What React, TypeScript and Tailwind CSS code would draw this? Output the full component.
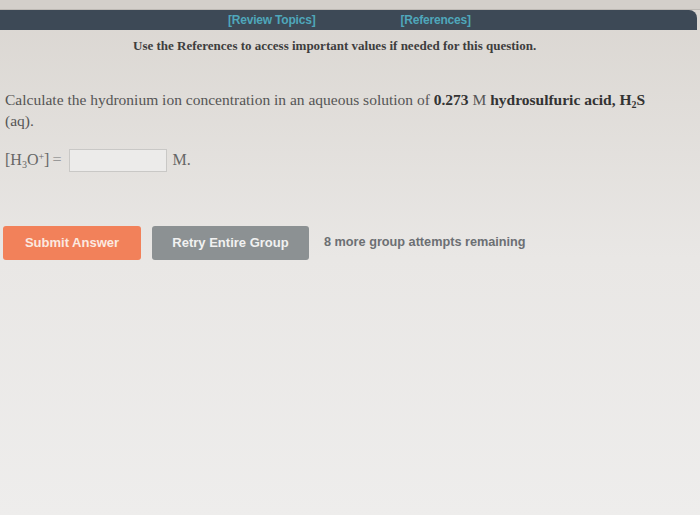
export default function App() {
  return (
    <div className="w-[700px] h-[515px] overflow-hidden flex flex-col bg-linear-to-b from-[#dad6d1] via-[#e9e7e5] to-[#eeedec] font-['Liberation_Serif',serif]">
      {/* top strip */}
      <div className="h-[10px] bg-[#d3cfca] border-b border-[#bdb9b4]" />

      {/* header bar */}
      <div className="h-[20px] mr-[3px] bg-[#3d4956] rounded-tr-[8px] flex items-center pl-[228px] font-['Liberation_Sans',sans-serif] font-bold text-[12px] text-[#4fa7bb] tracking-[-0.2px]">
        <span>[Review Topics]</span>
        <span className="ml-[85px]">[References]</span>
      </div>

      <p className="mt-[8px] pl-[133px] text-[13px] font-bold text-[#3e3e3e] leading-[16px]">
        Use the References to access important values if needed for this question.
      </p>

      {/* question */}
      <div className="mt-[35px] pl-[5px] text-[15.5px] leading-[21px] text-[#555]">
        <p>
          Calculate the hydronium ion concentration in an aqueous solution of{" "}
          <b className="text-[#333]">0.273</b> M{" "}
          <b className="text-[#333]">
            hydrosulfuric acid, H<sub className="text-[10px]">2</sub>S
          </b>
        </p>
        <p>(aq).</p>
      </div>

      <div className="mt-[17px] pl-[5px] flex items-center text-[16px] text-[#666]">
        <span>
          [H<sub className="text-[10px]">3</sub>O<sup className="text-[10px]">+</sup>]
        </span>
        <span className="ml-[3px] text-[#999]">=</span>
        <div className="ml-[8px] w-[98px] h-[23px] border border-[#c9c8c6] bg-[#ecebea]" />
        <span className="ml-[5px] text-[#666]">M.</span>
      </div>

      {/* buttons */}
      <div className="mt-[54px] pl-[3px] flex items-center font-['Liberation_Sans',sans-serif] font-bold text-[13px]">
        <button className="w-[138px] h-[34px] rounded-[3px] bg-[#f2815a] text-[#fbe9e0]">
          Submit Answer
        </button>
        <button className="ml-[11px] w-[157px] h-[34px] rounded-[3px] bg-[#8c9193] text-[#f1f1f1]">
          Retry Entire Group
        </button>
        <span className="ml-[15px] text-[12.7px] text-[#6c6f73] font-semibold">8 more group attempts remaining</span>
      </div>
    </div>
  );
}
